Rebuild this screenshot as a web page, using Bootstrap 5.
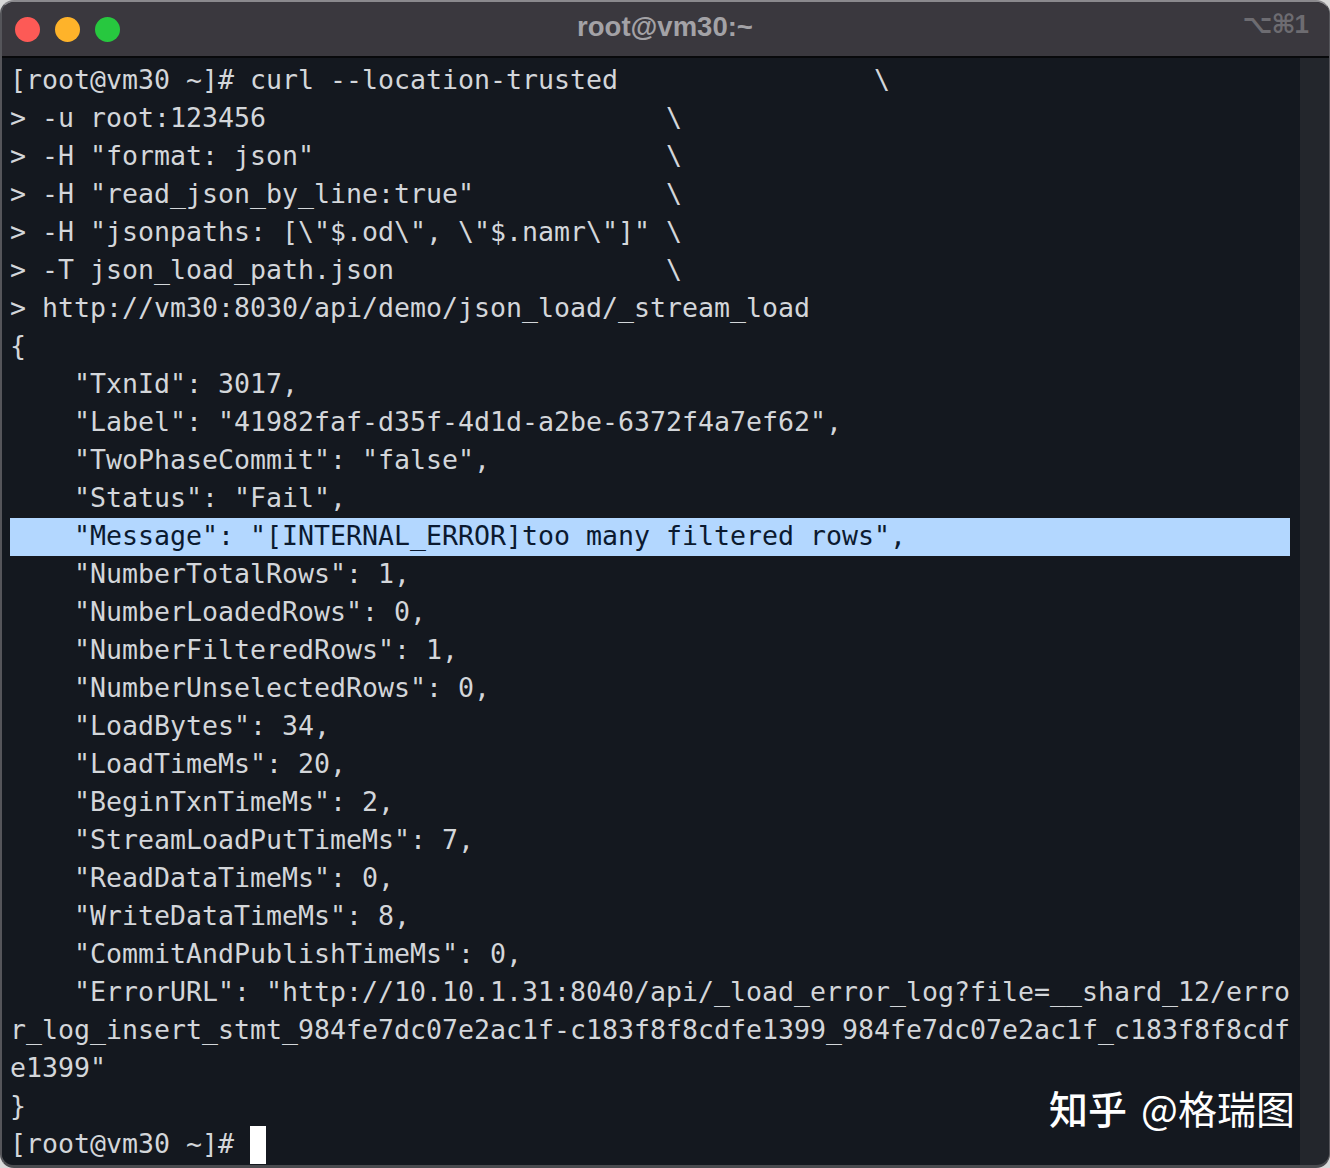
<!doctype html>
<html lang="en">
<head>
<meta charset="utf-8">
<title>root@vm30:~</title>
<link href="https://cdn.jsdelivr.net/npm/bootstrap@5.3.0/dist/css/bootstrap.min.css" rel="stylesheet">
<style>
html,body{height:100%;margin:0;background:#d9d9d9;overflow:hidden}
.term-win{width:1330px;height:1168px;background:#23262c;border-radius:14px;overflow:hidden;border:1px solid #55555a;border-left-width:2px;border-top:2px solid #8a898d;border-bottom:3px solid #4a4b4f;box-sizing:border-box;position:relative}
.term-title{height:56px;background:#3a383e;border-bottom:2px solid #08090b;padding:0 13px}
.dot-light{width:25px;height:25px;border-radius:50%}
.dot-r{background:#fd5a56}.dot-y{background:#feb32a}.dot-g{background:#27c83f}
.term-gap{gap:15px}
.term-name{font:700 27.5px/1 "Liberation Sans",sans-serif;color:#a3a2a6;left:-1px;right:0;top:11px;text-align:center}
.term-short{font:700 26px/1 "Liberation Sans","DejaVu Sans",sans-serif;color:#6d6c71;right:21px;top:9px;letter-spacing:-1px}
.term-body{width:1298px;background:#14181f;padding:4px 0 0 8px;height:1110px;font-family:"DejaVu Sans Mono",monospace;font-size:26.58px;line-height:36px;color:#d3d6da}
.term-row{height:38px;width:1280px;white-space:pre}
.term-hl{background:#b3d7ff;color:#0b1a30}
.term-cursor{display:inline-block;width:16px;height:38px;background:#fff;vertical-align:top}
.term-mark{right:34px;bottom:38px;font:400 39px/1 "Noto Sans CJK SC","Liberation Sans",sans-serif;color:#fff;white-space:nowrap}
.term-mark-head{font-weight:500;margin-right:14px}
</style>
</head>
<body>
<div class="term-win">
  <div class="term-title d-flex align-items-center term-gap position-relative">
    <span class="dot-light dot-r"></span><span class="dot-light dot-y"></span><span class="dot-light dot-g"></span>
    <div class="term-name position-absolute">root@vm30:~</div>
    <div class="term-short position-absolute">⌥⌘1</div>
  </div>
  <div class="term-body">
    <div class="term-row">[root@vm30 ~]# curl --location-trusted                \</div>
    <div class="term-row">&gt; -u root:123456                         \</div>
    <div class="term-row">&gt; -H "format: json"                      \</div>
    <div class="term-row">&gt; -H "read_json_by_line:true"            \</div>
    <div class="term-row">&gt; -H "jsonpaths: [\"$.od\", \"$.namr\"]" \</div>
    <div class="term-row">&gt; -T json_load_path.json                 \</div>
    <div class="term-row">&gt; http://vm30:8030/api/demo/json_load/_stream_load</div>
    <div class="term-row">{</div>
    <div class="term-row">    "TxnId": 3017,</div>
    <div class="term-row">    "Label": "41982faf-d35f-4d1d-a2be-6372f4a7ef62",</div>
    <div class="term-row">    "TwoPhaseCommit": "false",</div>
    <div class="term-row">    "Status": "Fail",</div>
    <div class="term-row term-hl">    "Message": "[INTERNAL_ERROR]too many filtered rows",</div>
    <div class="term-row">    "NumberTotalRows": 1,</div>
    <div class="term-row">    "NumberLoadedRows": 0,</div>
    <div class="term-row">    "NumberFilteredRows": 1,</div>
    <div class="term-row">    "NumberUnselectedRows": 0,</div>
    <div class="term-row">    "LoadBytes": 34,</div>
    <div class="term-row">    "LoadTimeMs": 20,</div>
    <div class="term-row">    "BeginTxnTimeMs": 2,</div>
    <div class="term-row">    "StreamLoadPutTimeMs": 7,</div>
    <div class="term-row">    "ReadDataTimeMs": 0,</div>
    <div class="term-row">    "WriteDataTimeMs": 8,</div>
    <div class="term-row">    "CommitAndPublishTimeMs": 0,</div>
    <div class="term-row">    "ErrorURL": "http://10.10.1.31:8040/api/_load_error_log?file=__shard_12/erro</div>
    <div class="term-row">r_log_insert_stmt_984fe7dc07e2ac1f-c183f8f8cdfe1399_984fe7dc07e2ac1f_c183f8f8cdf</div>
    <div class="term-row">e1399"</div>
    <div class="term-row">}</div>
    <div class="term-row">[root@vm30 ~]# <span class="term-cursor"></span></div>
  </div>
  <div class="term-mark position-absolute"><span class="term-mark-head">知乎</span>@格瑞图</div>
</div>
<script src="https://cdn.jsdelivr.net/npm/bootstrap@5.3.0/dist/js/bootstrap.bundle.min.js"></script>
</body>
</html>
